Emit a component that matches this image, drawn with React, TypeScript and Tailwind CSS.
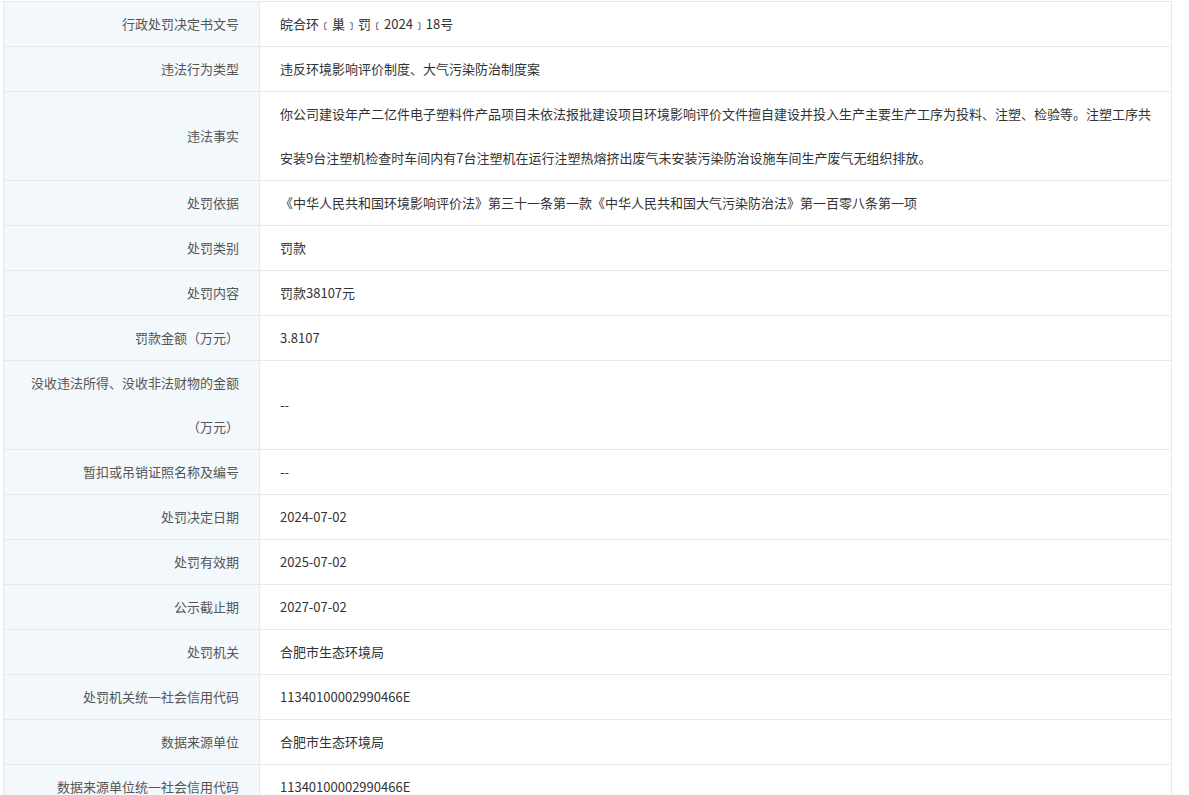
const rows: [string, string][] = [
  ['行政处罚决定书文号', '皖合环﹝巢﹞罚﹝2024﹞18号'],
  ['违法行为类型', '违反环境影响评价制度、大气污染防治制度案'],
  ['违法事实', '你公司建设年产二亿件电子塑料件产品项目未依法报批建设项目环境影响评价文件擅自建设并投入生产主要生产工序为投料、注塑、检验等。注塑工序共安装9台注塑机检查时车间内有7台注塑机在运行注塑热熔挤出废气未安装污染防治设施车间生产废气无组织排放。'],
  ['处罚依据', '《中华人民共和国环境影响评价法》第三十一条第一款《中华人民共和国大气污染防治法》第一百零八条第一项'],
  ['处罚类别', '罚款'],
  ['处罚内容', '罚款38107元'],
  ['罚款金额（万元）', '3.8107'],
  ['没收违法所得、没收非法财物的金额（万元）', '--'],
  ['暂扣或吊销证照名称及编号', '--'],
  ['处罚决定日期', '2024-07-02'],
  ['处罚有效期', '2025-07-02'],
  ['公示截止期', '2027-07-02'],
  ['处罚机关', '合肥市生态环境局'],
  ['处罚机关统一社会信用代码', '11340100002990466E'],
  ['数据来源单位', '合肥市生态环境局'],
  ['数据来源单位统一社会信用代码', '11340100002990466E'],
]

export default function App() {
  return (
    <div
      className="h-[795px] w-[1189px] overflow-hidden bg-white pl-[3px] pr-[17px] pt-px"
      style={{ fontFamily: '"Noto Sans CJK SC", "Liberation Sans", sans-serif' }}
    >
      <table className="w-[1169px] table-fixed border-collapse text-[13px] leading-[44px]">
        <colgroup>
          <col className="w-[256px]" />
          <col />
        </colgroup>
        <tbody>
          {rows.map(([k, v]) => (
            <tr key={k}>
              <td className="border border-[#e3e9ee] bg-[#f3f8fc] px-5 text-right align-middle text-[#555]">
                {k}
              </td>
              <td className="border border-[#e3e9ee] px-5 align-middle text-[#333]">{v}</td>
            </tr>
          ))}
        </tbody>
      </table>
    </div>
  )
}
